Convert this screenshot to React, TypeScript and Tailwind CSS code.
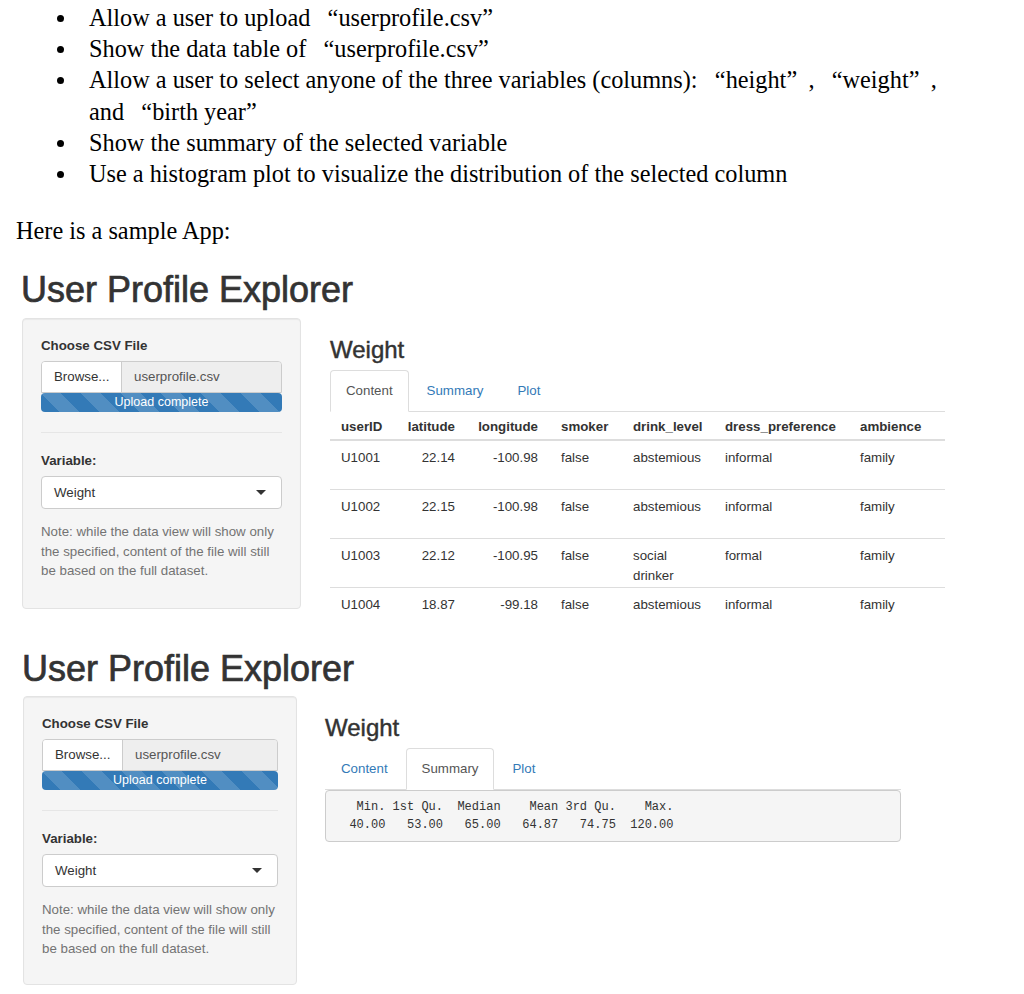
const headers = ["userID", "latitude", "longitude", "smoker", "drink_level", "dress_preference", "ambience"];

const rows = [
  ["U1001", "22.14", "-100.98", "false", "abstemious", "informal", "family"],
  ["U1002", "22.15", "-100.98", "false", "abstemious", "informal", "family"],
  ["U1003", "22.12", "-100.95", "false", "social drinker", "formal", "family"],
  ["U1004", "18.87", "-99.18", "false", "abstemious", "informal", "family"],
];

const summary = `   Min. 1st Qu.  Median    Mean 3rd Qu.    Max.
  40.00   53.00   65.00   64.87   74.75  120.00`;

// full-width style quotes like the source document
function Open() {
  return <span className="inline-block w-[22px] text-right">“</span>;
}
function Close() {
  return <span className="inline-block w-[22px] text-left">”</span>;
}

function Bullet({ children }: { children: React.ReactNode }) {
  return (
    <li className="flex">
      <span className="w-[89px] shrink-0 flex justify-end pr-[25px]">
        <span className="mt-[13px] w-[7px] h-[7px] rounded-full bg-black" />
      </span>
      <span>{children}</span>
    </li>
  );
}

function cellClass(i: number) {
  if (i === 0) return "pl-[11px] pr-2";
  if (i === 1 || i === 2) return "text-right pr-[15px] pl-2";
  return "px-2";
}

const grid = "grid grid-cols-[69px_71px_83px_72px_92px_135px_93px]";

function Sidebar({ width, pb }: { width: string; pb: string }) {
  return (
    <div className={`${width} ${pb} shrink-0 bg-[#f5f5f5] border border-[#e3e3e3] rounded-[4px] shadow-[inset_0_1px_1px_rgba(0,0,0,0.05)] px-[18px] pt-[17px]`}>
      <div className="font-bold leading-[20px]">Choose CSV File</div>
      <div className="mt-[5px] flex h-[32px] rounded-t-[4px] border border-[#ccc] overflow-hidden">
        <div className="w-[80px] shrink-0 bg-white border-r border-[#ccc] flex items-center pl-[12px] text-[#333]">Browse...</div>
        <div className="flex-1 bg-[#eee] flex items-center pl-[12px] text-[#555]">userprofile.csv</div>
      </div>
      <div className="h-[19px] rounded-[4px] bg-[#337ab7] bg-[linear-gradient(45deg,rgba(255,255,255,.15)_25%,transparent_25%,transparent_50%,rgba(255,255,255,.15)_50%,rgba(255,255,255,.15)_75%,transparent_75%,transparent)] bg-[length:40px_40px] text-white text-[12.5px] leading-[19px] text-center">
        Upload complete
      </div>
      <div className="mt-[20px] border-t border-[#e6e6e6]" />
      <div className="mt-[18px] font-bold leading-[20px]">Variable:</div>
      <div className="mt-[5px] h-[33px] bg-white border border-[#ccc] rounded-[4px] flex items-center justify-between pl-[12px] pr-[15px]">
        <span>Weight</span>
        <svg width="10" height="5" viewBox="0 0 10 5">
          <polygon points="0,0 10,0 5,5" fill="#333" />
        </svg>
      </div>
      <p className="mt-[13px] text-[#737373] leading-[19.5px]">
        Note: while the data view will show only the specified, content of the file will still be based on the full dataset.
      </p>
    </div>
  );
}

function Tabs({ active }: { active: number }) {
  const names = ["Content", "Summary", "Plot"];
  return (
    <div className="flex border-b border-[#ddd]">
      {names.map((n, i) => (
        <div
          key={n}
          className={
            i === active
              ? "-mb-px mr-[2px] px-[15px] py-[10px] leading-[20px] border border-[#ddd] border-b-white bg-white rounded-t-[4px] text-[#555]"
              : "-mb-px mr-[2px] px-[15px] py-[10px] leading-[20px] border border-transparent text-[#337ab7]"
          }
        >
          {n}
        </div>
      ))}
    </div>
  );
}

function Title() {
  return (
    <h1 className="-ml-[1px] text-[36px] leading-[40px] font-medium text-[#333] [-webkit-text-stroke:0.7px_#333]">
      User Profile Explorer
    </h1>
  );
}

function Heading() {
  return <h3 className="mt-[19px] mb-[7px] text-[24px] leading-[26px] text-[#333] [-webkit-text-stroke:0.45px_#333]">Weight</h3>;
}

export default function App() {
  return (
    <div className="w-[1024px] min-h-[994px] bg-white overflow-hidden">
      <ul className="pt-[2px] text-[24.3px] leading-[31.2px] text-black font-['Liberation_Serif','Times_New_Roman',serif]">
        <Bullet>
          Allow a user to upload <Open />userprofile.csv<Close />
        </Bullet>
        <Bullet>
          Show the data table of <Open />userprofile.csv<Close />
        </Bullet>
        <Bullet>
          Allow a user to select anyone of the three variables (columns): <Open />height<Close />, <Open />weight<Close />,
          <br />
          and <Open />birth year<Close />
        </Bullet>
        <Bullet>Show the summary of the selected variable</Bullet>
        <Bullet>Use a histogram plot to visualize the distribution of the selected column</Bullet>
      </ul>
      <p className="mt-[26px] pl-[16px] text-[24.3px] leading-[31.2px] text-black font-['Liberation_Serif','Times_New_Roman',serif]">
        Here is a sample App:
      </p>

      {/* first app: content tab */}
      <section className="mt-[24px] pl-[22px] text-[13.3px] text-[#333] font-['Liberation_Sans',Arial,sans-serif]">
        <Title />
        <div className="mt-[8px] flex items-start gap-[29px]">
          <Sidebar width="w-[279px]" pb="pb-[27px]" />
          <div className="w-[615px]">
            <Heading />
            <Tabs active={0} />
            <div className={`${grid} h-[29px] pt-[5px] leading-[19.5px] font-bold border-b-2 border-[#ddd]`}>
              {headers.map((h, i) => (
                <div key={h} className={cellClass(i)}>
                  {h}
                </div>
              ))}
            </div>
            {rows.map((r, ri) => (
              <div
                key={r[0]}
                className={`${grid} pt-[7px] leading-[19.5px] ${ri > 0 ? "border-t border-[#ddd]" : ""} ${ri === 0 ? "h-[48px]" : ri < 3 ? "h-[49px]" : "h-[31px]"}`}
              >
                {r.map((c, i) => (
                  <div key={i} className={cellClass(i)}>
                    {c}
                  </div>
                ))}
              </div>
            ))}
          </div>
        </div>
      </section>

      {/* second app: summary tab */}
      <section className="mt-[31px] pl-[23px] text-[13.3px] text-[#333] font-['Liberation_Sans',Arial,sans-serif]">
        <Title />
        <div className="mt-[7px] flex items-start gap-[28px]">
          <Sidebar width="w-[274px]" pb="pb-[25px]" />
          <div className="w-[576px]">
            <Heading />
            <Tabs active={1} />
            <pre className="mt-0 border border-[#ccc] rounded-[4px] bg-[#f5f5f5] px-[9px] py-[7px] text-[12px] leading-[18px] text-[#333] whitespace-pre font-['Liberation_Mono','Courier_New',monospace]">
              {summary}
            </pre>
          </div>
        </div>
      </section>
    </div>
  );
}
